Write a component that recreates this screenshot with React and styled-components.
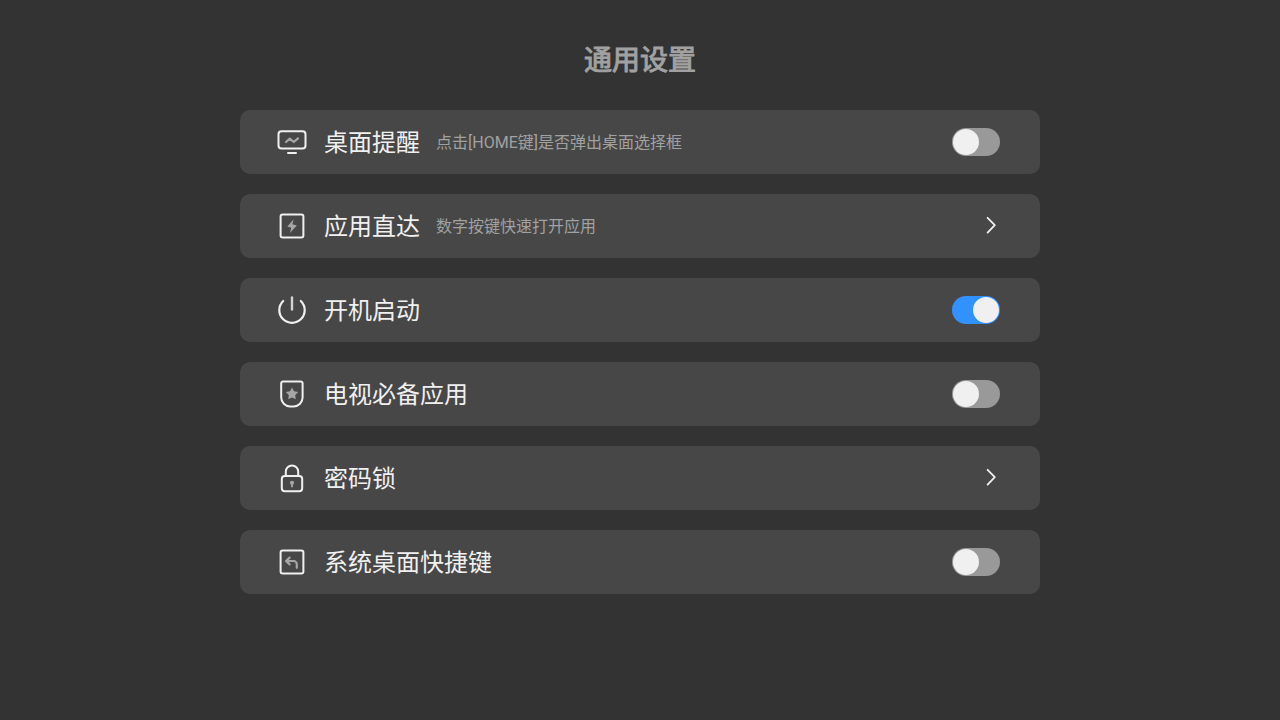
import React, { useState } from "react";
import styled, { createGlobalStyle } from "styled-components";

const GlobalStyle = createGlobalStyle`
  * {
    box-sizing: border-box;
  }
  body {
    margin: 0;
    background: #333;
    color: #f0f0f0;
    font-family: Roboto, "Noto Sans CJK SC", sans-serif;
  }
`;

const Page = styled.main`
  padding: 40px 20px;
`;

const Title = styled.h1`
  margin: 0 0 28px;
  color: #a1a1a1;
  font-size: 28px;
  font-weight: 400;
  line-height: 42px;
  text-align: center;
  -webkit-text-stroke: 1px #a1a1a1;
`;

const List = styled.ul`
  display: flex;
  flex-direction: column;
  gap: 20px;
  max-width: 800px;
  margin: 0 auto;
  padding: 0;
  list-style: none;
`;

const Row = styled.li`
  display: flex;
  align-items: center;
  gap: 16px;
  min-height: 64px;
  padding: 0 40px 0 36px;
  border-radius: 10px;
  background: #474747;
`;

const Icon = styled.svg`
  flex: none;
  width: 32px;
  height: 32px;
  fill: none;
  stroke: #f0f0f0;
  stroke-width: 2;
  stroke-linecap: round;
  stroke-linejoin: round;

  .dim {
    stroke: #a6a6a6;
  }
  .solid {
    fill: #a6a6a6;
    stroke: none;
  }
`;

const Name = styled.label`
  padding-top: 2px;
  font-size: 24px;
  line-height: 36px;
`;

const Hint = styled.span`
  padding-top: 2px;
  color: #a1a1a1;
  font-size: 16px;
  line-height: 24px;
`;

const Switch = styled.input`
  appearance: none;
  display: flex;
  width: 48px;
  height: 28px;
  margin: 0 0 0 auto;
  padding: 1px;
  border-radius: 14px;
  background: #999;
  cursor: pointer;

  &::before {
    content: "";
    width: 26px;
    height: 26px;
    border-radius: 50%;
    background: #f0f0f0;
  }
  &:checked {
    justify-content: flex-end;
    background: #3191ff;
  }
`;

const OpenButton = styled.button`
  display: flex;
  margin-left: auto;
  padding: 0;
  border: 0;
  background: none;
  cursor: pointer;
`;

const Chevron = styled.svg`
  width: 18px;
  height: 24px;
  fill: none;
  stroke: #f0f0f0;
  stroke-width: 1.8;
  stroke-linecap: round;
  stroke-linejoin: round;
`;

const icons = {
  desktop: (
    <>
      <rect x="2.5" y="5.2" width="27" height="17.4" rx="3" />
      <path d="M12 27h8" />
      <path className="dim" d="M10 16l3.8-3.4 4 3.4 4.2-3.6" strokeWidth="2.2" />
    </>
  ),
  bolt: (
    <>
      <rect x="4.6" y="4.6" width="22.8" height="22.8" rx="2" />
      <path
        className="solid"
        d="M17.6 9.2L11.4 16.6l3.8 1.2L14 23l6.8-7.6-4.4-1.2z"
      />
    </>
  ),
  power: (
    <>
      <path d="M7.2 7a12.7 12.7 0 1 0 17.6 0" strokeWidth="2.2" />
      <path d="M16 3.4v12.2" stroke="#d2d2d2" strokeWidth="2.4" />
    </>
  ),
  badge: (
    <>
      <path d="M7 3.4h17.8a1.8 1.8 0 0 1 1.8 1.8v14.4a8.8 8.8 0 0 1-8.8 8.8H14a8.8 8.8 0 0 1-8.8-8.8V5.2A1.8 1.8 0 0 1 7 3.4z" />
      <path
        className="solid"
        d="M16 9.6l2 3.7 4.2.7-3 3 .5 4.2L16 19.4l-3.7 1.8.5-4.2-3-3 4.2-.7z"
      />
    </>
  ),
  lock: (
    <>
      <rect x="5.8" y="14" width="20.4" height="15.2" rx="3" />
      <path d="M9.8 14V9.6a6.2 6.2 0 0 1 12.4 0V14" />
      <circle className="solid" cx="16" cy="20.8" r="2.1" />
      <path className="dim" d="M16 21v3.6" strokeWidth="1.8" />
    </>
  ),
  back: (
    <>
      <rect x="4.6" y="4.6" width="22.8" height="22.8" rx="2" />
      <path
        className="dim"
        d="M13.6 11.6L10 15l3.6 3.4M10 15h7.6a3.2 3.2 0 0 1 3.2 3.2v3.6"
        strokeWidth="2.2"
      />
    </>
  ),
};

const settings = [
  { id: "desktop", name: "桌面提醒", hint: "点击[HOME键]是否弹出桌面选择框", on: false },
  { id: "bolt", name: "应用直达", hint: "数字按键快速打开应用" },
  { id: "power", name: "开机启动", on: true },
  { id: "badge", name: "电视必备应用", on: false },
  { id: "lock", name: "密码锁" },
  { id: "back", name: "系统桌面快捷键", on: false },
];

const Setting = ({ id, name, hint, on }) => {
  const [checked, setChecked] = useState(on);

  return (
    <Row>
      <Icon viewBox="0 0 32 32" aria-hidden="true">
        {icons[id]}
      </Icon>
      <Name htmlFor={id}>{name}</Name>
      {hint && <Hint>{hint}</Hint>}
      {on === undefined ? (
        <OpenButton id={id} type="button">
          <Chevron viewBox="0 0 18 24" aria-hidden="true">
            <path d="M5.6 3.8l7.2 7.4-7.2 7.4" />
          </Chevron>
        </OpenButton>
      ) : (
        <Switch
          id={id}
          type="checkbox"
          role="switch"
          checked={checked}
          onChange={(e) => setChecked(e.target.checked)}
        />
      )}
    </Row>
  );
};

function App() {
  return (
    <Page>
      <GlobalStyle />
      <Title>通用设置</Title>
      <List>
        {settings.map((item) => (
          <Setting key={item.id} {...item} />
        ))}
      </List>
    </Page>
  );
}

export default App;
